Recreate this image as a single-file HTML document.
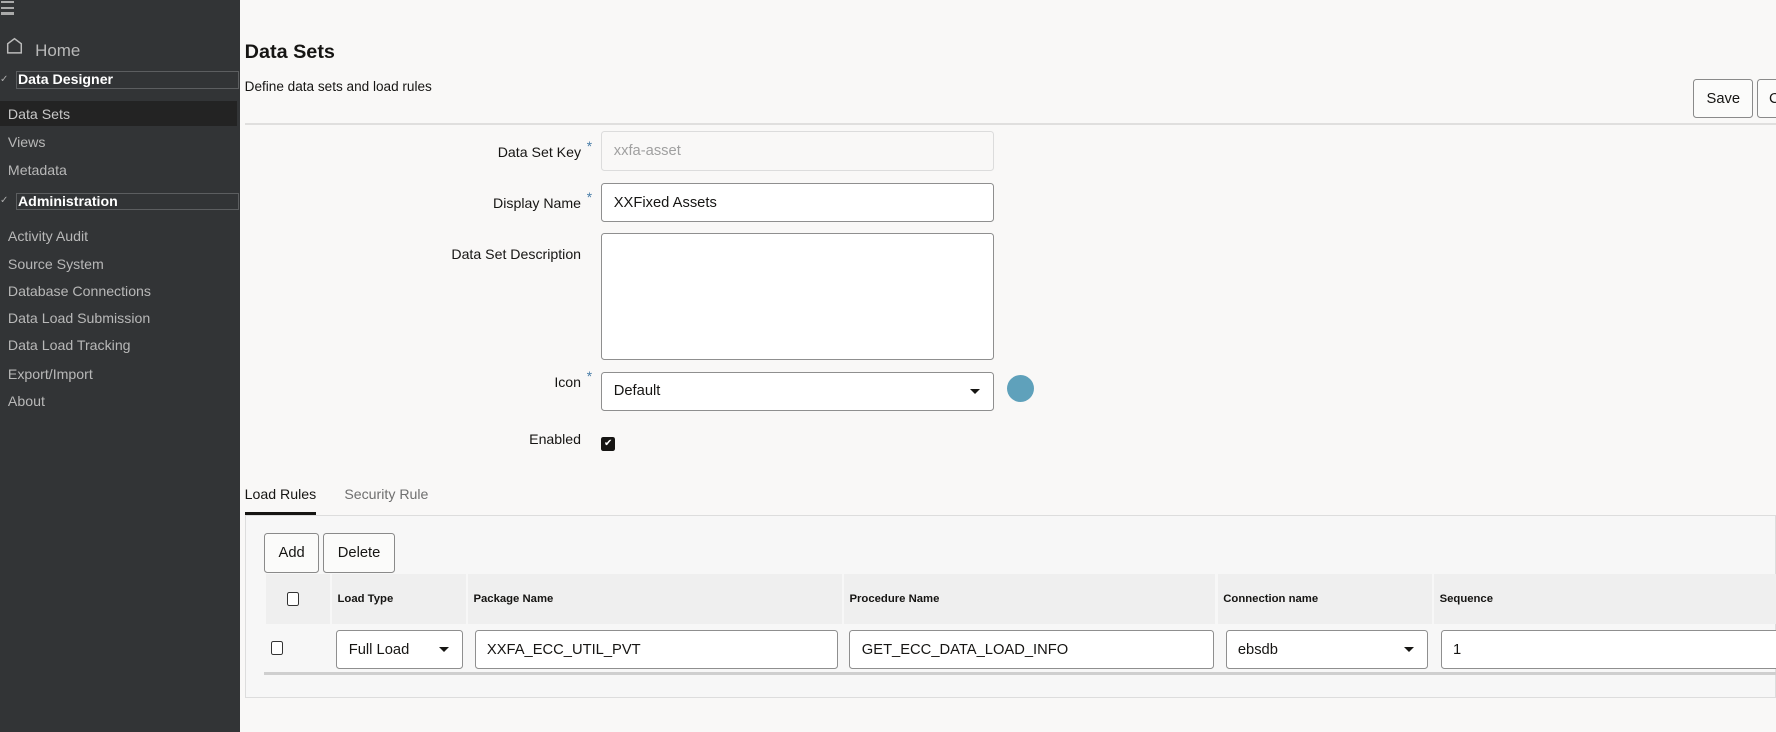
<!DOCTYPE html>
<html><head><meta charset="utf-8"><style>
html,body{margin:0;padding:0;}
body{width:1776px;height:732px;overflow:hidden;background:#f9f8f7;font-family:"Liberation Sans",sans-serif;}
#w{position:relative;width:1568px;height:646px;zoom:1.13265;overflow:hidden;}
.a{position:absolute;white-space:nowrap;}
#sb{position:absolute;left:0;top:0;width:212px;height:646px;background:#323436;}
.nav{position:absolute;left:7px;font-size:12.5px;color:#b8b8b8;line-height:16px;}
.grp{position:absolute;left:14px;width:194px;height:14px;border:1px solid #5c5e60;color:#fff;font-weight:bold;font-size:12.5px;line-height:14px;padding-left:1px;}
.chk{position:absolute;left:0;font-size:9px;color:#aaa;}
.lbl{position:absolute;right:1055px;font-size:12.5px;color:#161513;line-height:16px;}
.lbl i{position:absolute;left:100%;margin-left:5px;top:-4px;font-style:normal;color:#4a7ea8;font-size:12px;}
.inp{position:absolute;background:#fff;border:1px solid #8f8f8f;border-radius:3px;box-sizing:border-box;font-size:13px;color:#161513;padding-left:10px;display:flex;align-items:center;}
.tri{position:absolute;right:12px;top:50%;margin-top:-2px;width:0;height:0;border-left:5px solid transparent;border-right:5px solid transparent;border-top:5px solid #161513;}
.btn{position:absolute;border:1px solid #8a8a8a;border-radius:3px;box-sizing:border-box;font-size:13px;color:#161513;display:flex;align-items:center;justify-content:center;background:#fbfbfa;}
.th{position:absolute;top:507px;height:44px;background:#efefef;font-size:10px;font-weight:bold;color:#161513;display:flex;align-items:center;padding-left:5px;box-sizing:border-box;}
.cb{position:absolute;width:11px;height:12px;border:1px solid #333;border-radius:2px;background:#fff;box-sizing:border-box;}
</style></head><body><div id="w">
<div id="sb">
 <div class="a" style="left:1px;top:1px;width:11px;">
  <div style="height:2px;background:#aaa;margin-bottom:3px"></div><div style="height:2px;background:#aaa;margin-bottom:3px"></div><div style="height:2px;background:#aaa"></div></div>
 <svg class="a" style="left:5px;top:33px" width="15" height="15" viewBox="0 0 15 15"><path d="M1.5 14V6L7.5 1.5 13.5 6V14Z" fill="none" stroke="#bbb" stroke-width="1.3"/></svg>
 <div class="a" style="left:31px;top:36px;font-size:15px;color:#b8b8b8">Home</div>
 <div class="chk" style="top:65px">✓</div>
 <div class="grp" style="top:63px">Data Designer</div>
 <div class="a" style="left:0;top:89px;width:209px;height:22px;background:#232323"></div>
 <div class="nav" style="top:93px;color:#c8c8c8">Data Sets</div>
 <div class="nav" style="top:117px">Views</div>
 <div class="nav" style="top:142px">Metadata</div>
 <div class="chk" style="top:172px">✓</div>
 <div class="grp" style="top:170px">Administration</div>
 <div class="nav" style="top:200px">Activity Audit</div>
 <div class="nav" style="top:225px">Source System</div>
 <div class="nav" style="top:249px">Database Connections</div>
 <div class="nav" style="top:273px">Data Load Submission</div>
 <div class="nav" style="top:297px">Data Load Tracking</div>
 <div class="nav" style="top:322px">Export/Import</div>
 <div class="nav" style="top:346px">About</div>
</div>
<div class="a" style="left:216px;top:36px;font-size:17.5px;font-weight:bold;color:#161513">Data Sets</div>
<div class="a" style="left:216px;top:70px;font-size:12px;color:#161513">Define data sets and load rules</div>
<div class="btn" style="left:1495px;top:70px;width:53px;height:34px">Save</div>
<div class="btn" style="left:1551px;top:70px;width:40px;height:34px;justify-content:flex-start;padding-left:10px">C</div>
<div class="a" style="left:216px;top:109px;width:1352px;height:1px;background:#e0dfde"></div>

<div class="lbl" style="top:126px">Data Set Key<i>*</i></div>
<div class="inp" style="left:531px;top:116px;width:347px;height:35px;border-color:#dcdcdc;color:#a0a0a0;background:#f9f8f7">xxfa-asset</div>
<div class="lbl" style="top:171px">Display Name<i>*</i></div>
<div class="inp" style="left:531px;top:162px;width:347px;height:34px">XXFixed Assets</div>
<div class="lbl" style="top:216px;right:1055px">Data Set Description</div>
<div class="inp" style="left:531px;top:206px;width:347px;height:112px"></div>
<div class="lbl" style="top:329px">Icon<i>*</i></div>
<div class="inp" style="left:531px;top:328px;width:347px;height:35px">Default<span class="tri"></span></div>
<div class="a" style="left:889px;top:331px;width:24px;height:24px;border-radius:50%;background:#5fa1bb"></div>
<div class="lbl" style="top:380px">Enabled</div>
<div class="a" style="left:531px;top:386px;width:12px;height:12px;background:#161513;border-radius:2px;color:#fff;font-size:9px;line-height:12px;text-align:center">✔</div>

<div class="a" style="left:216px;top:429px;font-size:12.5px;color:#161513">Load Rules</div>
<div class="a" style="left:304px;top:429px;font-size:12.5px;color:#6f6f6f">Security Rule</div>
<div class="a" style="left:216px;top:452px;width:63px;height:3px;background:#161513"></div>
<div class="a" style="left:216px;top:455px;width:1352px;height:161px;background:#f7f7f7;border:1px solid #ddd;box-sizing:border-box"></div>
<div class="btn" style="left:233px;top:471px;width:49px;height:35px">Add</div>
<div class="btn" style="left:285px;top:471px;width:64px;height:35px">Delete</div>

<div class="th" style="left:235px;width:56px"></div>
<div class="cb" style="left:253px;top:523px"></div>
<div class="th" style="left:293px;width:118px">Load Type</div>
<div class="th" style="left:413px;width:330px">Package Name</div>
<div class="th" style="left:745px;width:328px">Procedure Name</div>
<div class="th" style="left:1075px;width:189px">Connection name</div>
<div class="th" style="left:1266px;width:302px">Sequence</div>

<div class="cb" style="left:239px;top:566px"></div>
<div class="inp" style="left:297px;top:556px;width:112px;height:35px">Full Load<span class="tri"></span></div>
<div class="inp" style="left:419px;top:556px;width:321px;height:35px">XXFA_ECC_UTIL_PVT</div>
<div class="inp" style="left:750px;top:556px;width:322px;height:35px">GET_ECC_DATA_LOAD_INFO</div>
<div class="inp" style="left:1082px;top:556px;width:179px;height:35px">ebsdb<span class="tri"></span></div>
<div class="inp" style="left:1272px;top:556px;width:310px;height:35px">1</div>
<div class="a" style="left:233px;top:593px;width:1335px;height:3px;background:#cfcfcf"></div>
</div></body></html>
